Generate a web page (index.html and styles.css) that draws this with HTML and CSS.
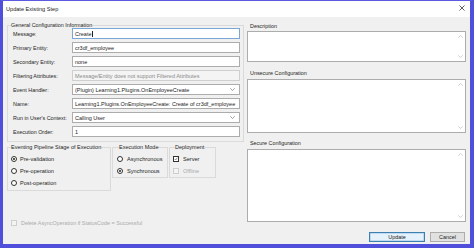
FILE: index.html
```html
<!DOCTYPE html>
<html>
<head>
<meta charset="utf-8">
<link rel="stylesheet" href="styles.css">
</head>
<body>
<div class="window">
  <div class="titlebar">
    <span class="title">Update Existing Step</span>
    <svg class="close" width="6" height="6" viewBox="0 0 6 6"><path d="M0.5 0.5L5.5 5.5M5.5 0.5L0.5 5.5" stroke="#333" stroke-width="0.8"/></svg>
  </div>
  <div class="content">
    <div class="main">
      <div class="left">
        <fieldset class="group general">
          <legend>General Configuration Information</legend>
          <div class="row"><span class="lbl">Message:</span><div class="field focus">Create<span class="caret"></span></div></div>
          <div class="row"><span class="lbl">Primary Entity:</span><div class="field">cr3df_employee</div></div>
          <div class="row"><span class="lbl">Secondary Entity:</span><div class="field">none</div></div>
          <div class="row"><span class="lbl">Filtering Attributes:</span><div class="field disabled">Message/Entity does not support Filtered Attributes</div></div>
          <div class="row"><span class="lbl">Event Handler:</span><div class="field select"><span class="val">(Plugin) Learning1.Plugins.OnEmployeeCreate</span><svg class="chev" width="5" height="3" viewBox="0 0 5 3"><path d="M0.3 0.3L2.5 2.5L4.7 0.3" fill="none" stroke="#777" stroke-width="0.7"/></svg></div></div>
          <div class="row"><span class="lbl">Name:</span><div class="field">Learning1.Plugins.OnEmployeeCreate: Create of cr3df_employee</div></div>
          <div class="row"><span class="lbl">Run in User's Context:</span><div class="field select"><span class="val">Calling User</span><svg class="chev" width="5" height="3" viewBox="0 0 5 3"><path d="M0.3 0.3L2.5 2.5L4.7 0.3" fill="none" stroke="#777" stroke-width="0.7"/></svg></div></div>
          <div class="row"><span class="lbl">Execution Order:</span><div class="field">1</div></div>
        </fieldset>
        <div class="options">
          <fieldset class="group pipeline">
            <legend>Eventing Pipeline Stage of Execution</legend>
            <div class="opt"><span class="radio on"></span>Pre-validation</div>
            <div class="opt"><span class="radio"></span>Pre-operation</div>
            <div class="opt"><span class="radio"></span>Post-operation</div>
          </fieldset>
          <fieldset class="group mode">
            <legend>Execution Mode</legend>
            <div class="opt"><span class="radio"></span>Asynchronous</div>
            <div class="opt"><span class="radio on"></span>Synchronous</div>
          </fieldset>
          <fieldset class="group deploy">
            <legend>Deployment</legend>
            <div class="opt"><span class="check on"><svg width="6" height="6" viewBox="0 0 6 6"><path d="M1 3L2.5 4.5L5 1.2" fill="none" stroke="#333" stroke-width="0.8"/></svg></span>Server</div>
            <div class="opt dis"><span class="check dis"></span>Offline</div>
          </fieldset>
        </div>
        <div class="delete-row"><span class="check dis"></span>Delete AsyncOperation if StatusCode = Successful</div>
      </div>
      <div class="right">
        <div class="sec-label">Description</div>
        <div class="textarea desc">
          <div class="ta-body"></div>
          <div class="ta-scroll">
            <svg width="5" height="3" viewBox="0 0 5 3"><path d="M0.3 2.7L2.5 0.5L4.7 2.7" fill="none" stroke="#bbb" stroke-width="0.7"/></svg>
            <svg width="5" height="3" viewBox="0 0 5 3"><path d="M0.3 0.3L2.5 2.5L4.7 0.3" fill="none" stroke="#bbb" stroke-width="0.7"/></svg>
          </div>
        </div>
        <div class="sec-label next">Unsecure Configuration</div>
        <div class="textarea unsecure">
          <div class="ta-body"></div>
          <div class="ta-scroll">
            <svg width="5" height="3" viewBox="0 0 5 3"><path d="M0.3 2.7L2.5 0.5L4.7 2.7" fill="none" stroke="#bbb" stroke-width="0.7"/></svg>
            <svg width="5" height="3" viewBox="0 0 5 3"><path d="M0.3 0.3L2.5 2.5L4.7 0.3" fill="none" stroke="#bbb" stroke-width="0.7"/></svg>
          </div>
        </div>
        <div class="sec-label next2">Secure Configuration</div>
        <div class="textarea secure">
          <div class="ta-body"></div>
          <div class="ta-scroll">
            <svg width="5" height="3" viewBox="0 0 5 3"><path d="M0.3 2.7L2.5 0.5L4.7 2.7" fill="none" stroke="#bbb" stroke-width="0.7"/></svg>
            <svg width="5" height="3" viewBox="0 0 5 3"><path d="M0.3 0.3L2.5 2.5L4.7 0.3" fill="none" stroke="#bbb" stroke-width="0.7"/></svg>
          </div>
        </div>
      </div>
    </div>
    <div class="buttons">
      <div class="btn primary">Update</div>
      <div class="btn cancel">Cancel</div>
    </div>
  </div>
</div>
</body>
</html>
```

FILE: styles.css
```css
* { box-sizing: border-box; }
html, body { margin: 0; padding: 0; }
body {
  width: 474px;
  height: 248px;
  overflow: hidden;
  font-family: "Liberation Sans", Arial, sans-serif;
  font-size: 5.4px;
  color: #1e1e1e;
}
.window {
  width: 474px;
  height: 248px;
  border-top: 1px solid #5b5be2;
  border-left: 3px solid #4f4fdc;
  border-right: 4px solid #4f4fdc;
  border-bottom: 4px solid #4f4fdc;
  display: flex;
  flex-direction: column;
  background: #f0f0f0;
}
.titlebar {
  height: 16px;
  background: #ffffff;
  display: flex;
  align-items: center;
  justify-content: space-between;
  padding: 0 5px 1px 3px;
  flex: none;
}
.title { font-size: 5.6px; color: #222; }
.close { display: block; margin-bottom: 1px; }
.content {
  flex: 1;
  display: flex;
  flex-direction: column;
  padding: 5px 4px 2px 4px;
}
.main {
  height: 205px;
  display: flex;
  gap: 3px;
}
.left {
  width: 237px;
  display: flex;
  flex-direction: column;
}
.group {
  margin: 0;
  padding: 0;
  border: 1px solid #dadada;
  min-width: 0;
}
.group legend {
  padding: 0;
  line-height: 6px;
  font-size: 5.5px;
}
.general { width: 237px; padding: 0 3px 4px 5px; }
.general legend { margin-left: -2px; font-size: 5.4px; }
.row {
  display: flex;
  align-items: center;
  height: 11px;
  margin-top: 3px;
}
.general legend + .row { margin-top: 0; }
.lbl { width: 59px; flex: none; }
.field {
  flex: 1;
  min-width: 0;
  height: 11px;
  border: 1px solid #acacac;
  background: #fff;
  display: flex;
  align-items: center;
  padding: 0 2px 0 2px;
  white-space: nowrap;
  overflow: hidden;
  font-size: 5.5px;
}
.field.focus { border-color: #7aa7d6; }
.caret { display: inline-block; width: 0.6px; height: 6px; background: #222; margin-left: 0.5px; }
.field.disabled { background: #f4f4f4; border-color: #cfcfcf; color: #8a8a8a; }
.field.select { justify-content: space-between; padding-right: 4px; }
.chev { display: block; flex: none; }
.options {
  display: flex;
  align-items: flex-start;
  gap: 1px;
  margin-top: 2px;
}
.pipeline { width: 104px; padding: 3px 0 1px 3px; }
.pipeline legend { margin-left: 0; }
.mode { width: 56px; padding: 3px 0 0 4px; }
.mode legend { margin-left: 2px; }
.deploy { width: 47px; padding: 3px 0 0 3px; }
.deploy legend { margin-left: 2px; }
.opt {
  height: 12px;
  display: flex;
  align-items: center;
  gap: 3px;
  font-size: 5.6px;
}
.mode .opt, .deploy .opt { gap: 4px; }
.opt.dis { color: #a8a8a8; }
.radio {
  width: 6px;
  height: 6px;
  border-radius: 50%;
  border: 0.8px solid #333;
  background: #fff;
  display: flex;
  align-items: center;
  justify-content: center;
  flex: none;
}
.radio.on::after {
  content: "";
  width: 2.6px;
  height: 2.6px;
  border-radius: 50%;
  background: #222;
}
.check {
  width: 6px;
  height: 6px;
  border: 0.8px solid #333;
  background: #fff;
  display: flex;
  align-items: center;
  justify-content: center;
  flex: none;
}
.check svg { display: block; }
.check.dis { border-color: #cfcfcf; background: #f4f4f4; }
.delete-row {
  margin-top: auto;
  height: 8px;
  display: flex;
  align-items: center;
  gap: 4px;
  padding-left: 4px;
  color: #ababab;
}
.right {
  width: 219px;
  display: flex;
  flex-direction: column;
}
.sec-label {
  height: 8px;
  line-height: 8px;
  padding-left: 3px;
}
.sec-label.next { margin-top: 7px; }
.sec-label.next2 { margin-top: 6px; }
.textarea {
  border: 1px solid #acacac;
  background: #fff;
  display: flex;
}
.desc { height: 31px; margin-top: 1px; }
.unsecure { height: 54px; margin-top: 2px; }
.secure { height: 73px; margin-top: 2px; }
.ta-body { flex: 1; }
.ta-scroll {
  width: 9px;
  display: flex;
  flex-direction: column;
  justify-content: space-between;
  align-items: center;
  padding: 3px 0 3px;
}
.ta-scroll svg { display: block; }
.buttons {
  margin-top: 5px;
  height: 10px;
  display: flex;
  justify-content: flex-end;
  gap: 5px;
  padding-right: 1px;
}
.btn {
  height: 10px;
  display: flex;
  align-items: center;
  justify-content: center;
  border: 1px solid #adadad;
  background: #e1e1e1;
  color: #222;
}
.btn.primary { width: 56px; border-color: #3c7fb1; background: #e5f1fb; box-shadow: inset 0 0 0 0.5px #9cc4e6; }
.btn.cancel { width: 35px; }
```
